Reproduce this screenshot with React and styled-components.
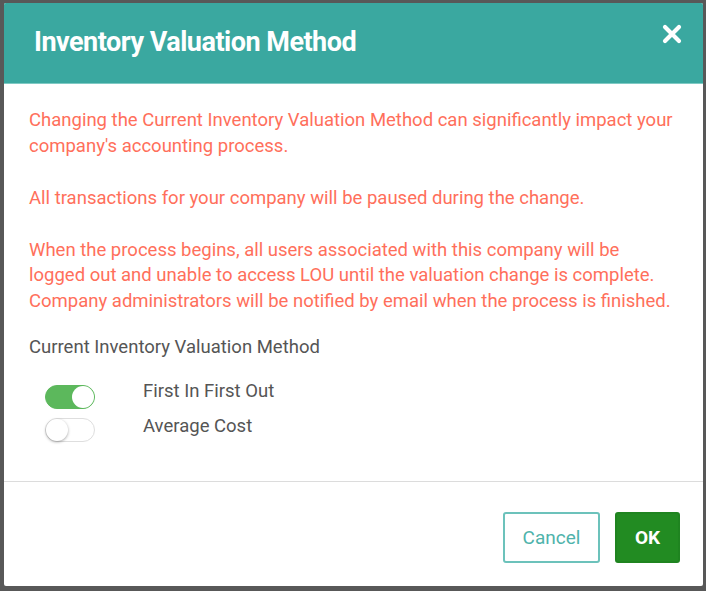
import React, { useState } from 'react';
import styled, { createGlobalStyle } from 'styled-components';

const Global = createGlobalStyle`
  html, body {
    margin: 0;
    padding: 0;
    background: #5a5a5a;
    font-family: Roboto, 'Liberation Sans', sans-serif;
  }
  * { box-sizing: border-box; }
`;

const Frame = styled.div`
  width: 706px;
  height: 591px;
  padding: 3px 3px 5px 4px;
  background: #585858;
`;

const Modal = styled.div`
  height: 100%;
  background: #fff;
  display: flex;
  flex-direction: column;
  border-radius: 2px;
  overflow: hidden;
`;

const Header = styled.div`
  height: 81px;
  background: #3aa8a0;
  display: flex;
  align-items: center;
  justify-content: space-between;
  padding: 0 21px 0 30px;
  border-bottom: 1px solid #7fcac4;
`;

const Title = styled.h2`
  margin: 0;
  color: #fff;
  font-size: 27px;
  font-weight: 700;
  letter-spacing: -0.5px;
  padding-bottom: 2px;
`;

const Close = styled.button`
  border: 0;
  background: none;
  padding: 0;
  margin-top: -19px;
  cursor: pointer;
  display: flex;
`;

const Body = styled.div`
  padding: 24px 25px 0 25px;
  flex: 1;
  border-bottom: 1px solid #dcdcdc;
`;

const Warning = styled.p`
  margin: 0 0 26.5px;
  color: #ff6f5b;
  font-size: 18.5px;
  line-height: 25.5px;
  &:last-of-type {
    margin-bottom: 0;
  }
`;

const Label = styled.div`
  color: #555;
  font-size: 18.5px;
  margin-top: 21px;
  line-height: 24px;
`;

const Options = styled.div`
  display: grid;
  grid-template-columns: 98px auto;
  row-gap: 11px;
  padding: 20px 0 0 16px;
`;

const Option = styled.label`
  display: contents;
  cursor: pointer;
`;

const Track = styled.span`
  position: relative;
  width: 50px;
  height: 24px;
  border-radius: 12px;
  margin: ${p => (p.$shift ? '4px 0 -4px' : '6px 0 -6px')};
  background: ${p => (p.$on ? '#5cb85c' : '#fff')};
  border: 1px solid ${p => (p.$on ? '#5cb85c' : '#dedede')};
  &::after {
    content: '';
    position: absolute;
    top: 0;
    left: ${p => (p.$on ? '26px' : '0')};
    width: 22px;
    height: 22px;
    border-radius: 50%;
    background: #fff;
    box-shadow: ${p => (p.$on ? 'none' : '0 1px 3px rgba(0,0,0,0.35)')};
  }
`;

const OptionText = styled.span`
  color: #555;
  font-size: 18.5px;
  line-height: 24px;
`;

const Footer = styled.div`
  height: 104px;
  display: flex;
  justify-content: flex-end;
  align-items: flex-start;
  gap: 15px;
  padding: 30px 23px 0 0;
`;

const Button = styled.button`
  height: 51px;
  padding: 0;
  width: ${p => (p.$primary ? '65px' : '97px')};
  border-radius: 3px;
  font-family: Roboto, 'Liberation Sans', sans-serif;
  font-size: 19px;
  font-weight: ${p => (p.$primary ? 700 : 400)};
  cursor: pointer;
  background: ${p => (p.$primary ? '#228b22' : '#fff')};
  color: ${p => (p.$primary ? '#fff' : '#4fb3ab')};
  border: 2px solid ${p => (p.$primary ? '#1f8420' : '#6cc2bb')};
`;

export default function App() {
  const [method, setMethod] = useState('fifo');

  return (
    <>
      <Global />
      <Frame>
        <Modal>
          <Header>
            <Title>Inventory Valuation Method</Title>
            <Close aria-label="Close">
              <svg width="20" height="20" viewBox="0 0 20 20">
                <path d="M3 3 L17 17 M17 3 L3 17" stroke="#fff" strokeWidth="4.2" strokeLinecap="round" />
              </svg>
            </Close>
          </Header>
          <Body>
            <Warning>
              Changing the Current Inventory Valuation Method can significantly impact your company's accounting process.
            </Warning>
            <Warning>All transactions for your company will be paused during the change.</Warning>
            <Warning>
              When the process begins, all users associated with this company will be logged out and unable to access LOU until the valuation change is complete. Company administrators will be notified by email when the process is finished.
            </Warning>
            <Label>Current Inventory Valuation Method</Label>
            <Options>
              <Option onClick={() => setMethod('fifo')}>
                <Track $on={method === 'fifo'} />
                <OptionText>First In First Out</OptionText>
              </Option>
              <Option onClick={() => setMethod('avg')}>
                <Track $on={method === 'avg'} $shift />
                <OptionText>Average Cost</OptionText>
              </Option>
            </Options>
          </Body>
          <Footer>
            <Button>Cancel</Button>
            <Button $primary>OK</Button>
          </Footer>
        </Modal>
      </Frame>
    </>
  );
}
